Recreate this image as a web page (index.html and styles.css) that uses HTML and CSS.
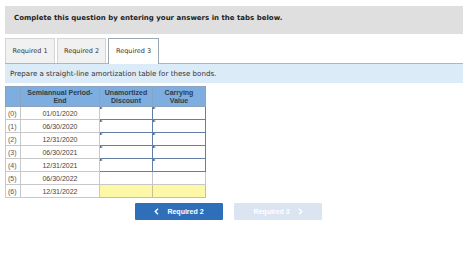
FILE: index.html
```html
<!DOCTYPE html>
<html lang="en">
<head>
    <meta charset="UTF-8">
    <title>Required 3</title>
    <link rel="stylesheet" href="styles.css">
</head>
<body>
    <div class="page">
        <div class="notice">Complete this question by entering your answers in the tabs below.</div>

        <div class="tabs">
            <div class="tab">Required 1</div>
            <div class="tab">Required 2</div>
            <div class="tab active">Required 3</div>
        </div>

        <div class="prompt">Prepare a straight-line amortization table for these bonds.</div>

        <table class="amort">
            <thead>
                <tr>
                    <th class="idx"></th>
                    <th class="date">Semiannual Period-<br>End</th>
                    <th class="num">Unamortized<br>Discount</th>
                    <th class="num">Carrying<br>Value</th>
                </tr>
            </thead>
            <tbody>
                <tr><td class="idx">(0)</td><td class="date">01/01/2020</td><td class="entry"></td><td class="entry"></td></tr>
                <tr><td class="idx">(1)</td><td class="date">06/30/2020</td><td class="entry"></td><td class="entry"></td></tr>
                <tr><td class="idx">(2)</td><td class="date">12/31/2020</td><td class="entry"></td><td class="entry"></td></tr>
                <tr><td class="idx">(3)</td><td class="date">06/30/2021</td><td class="entry"></td><td class="entry"></td></tr>
                <tr><td class="idx">(4)</td><td class="date">12/31/2021</td><td class="entry"></td><td class="entry"></td></tr>
                <tr><td class="idx">(5)</td><td class="date">06/30/2022</td><td class="blank"></td><td class="blank"></td></tr>
                <tr><td class="idx">(6)</td><td class="date">12/31/2022</td><td class="total"></td><td class="total"></td></tr>
            </tbody>
        </table>

        <div class="nav">
            <button class="nav-btn prev">
                <svg class="chev" width="5" height="7" viewBox="0 0 5 7"><path d="M4 0.8 L1.3 3.5 L4 6.2" fill="none" stroke="#fff" stroke-width="1.4"/></svg>
                Required 2
            </button>
            <button class="nav-btn next" disabled>
                Required 3
                <svg class="chev" width="5" height="7" viewBox="0 0 5 7"><path d="M1 0.8 L3.7 3.5 L1 6.2" fill="none" stroke="#fff" stroke-width="1.4"/></svg>
            </button>
        </div>
    </div>
</body>
</html>
```

FILE: styles.css
```css
body {
    margin: 0;
    background: #fff;
    font-family: "DejaVu Sans", Verdana, sans-serif;
    color: #333;
}
.page {
    padding: 6px 11px 0 5px;
}
.notice {
    background: #dfdfdf;
    height: 28px;
    line-height: 24px;
    padding-left: 9px;
    font-size: 7px;
    font-weight: bold;
    color: #222;
}
.tabs {
    display: flex;
    gap: 2px;
    margin-top: 4px;
    height: 25px;
    border-bottom: 1px solid #a8b8c8;
}
.tab {
    box-sizing: border-box;
    height: 25px;
    line-height: 24px;
    font-size: 6.5px;
    text-align: center;
    background: #f1f1f1;
    border: 1px solid #d4d4d4;
    border-bottom: none;
    color: #333;
}
.tab:nth-child(1) { width: 50px; }
.tab:nth-child(2) { width: 49px; }
.tab.active {
    width: 51px;
    background: #fff;
    border-color: #9aa6b2;
    height: 26px;
}
.prompt {
    background: #dcebf8;
    height: 19px;
    line-height: 19px;
    padding-left: 5px;
    font-size: 7.1px;
    color: #333;
}
.amort {
    margin-top: 3px;
    border-collapse: collapse;
    font-family: "Liberation Sans", Arial, sans-serif;
    font-size: 7px;
    border: 1px solid #9a9a9a;
}
.amort th {
    background: #7eaedf;
    color: #2f3c4c;
    font-weight: bold;
    height: 19px;
    line-height: 7.5px;
    border: 1px solid #8aa3bf;
    padding: 0;
    text-align: center;
}
.amort td {
    height: 12px;
    padding: 0;
    border: 1px solid #c8c8c8;
    color: #444;
}
.amort .idx {
    width: 15px;
    text-align: left;
    padding-left: 2px;
    box-sizing: border-box;
    color: #555;
}
.amort th.idx {
    width: 15px;
}
.amort .date {
    width: 78px;
    text-align: center;
}
.amort .num {
    width: 52px;
}
.amort td.entry {
    width: 52px;
    background: #fff;
    border: 1.5px solid #637fa6;
    position: relative;
}
.amort td.entry::before {
    content: "";
    position: absolute;
    left: 0;
    top: 0;
    border-left: 3px solid #3b4f6b;
    border-top: 1.5px solid transparent;
    border-bottom: 1.5px solid transparent;
}
.amort td.blank {
    background: #fff;
}
.amort td.total {
    background: #fdf7a8;
    border-color: #c9c28a;
}
.nav {
    display: flex;
    gap: 11px;
    margin-top: 5px;
    padding-left: 130px;
}
.nav-btn {
    display: flex;
    align-items: center;
    justify-content: center;
    gap: 8px;
    width: 88px;
    height: 17px;
    border: none;
    border-radius: 1px;
    font-family: "Liberation Sans", Arial, sans-serif;
    font-size: 7px;
    font-weight: bold;
    padding: 0;
}
.prev {
    background: #2f6fba;
    color: #fff;
}
.next {
    background: #dbe5f2;
    color: #fff;
}
```
